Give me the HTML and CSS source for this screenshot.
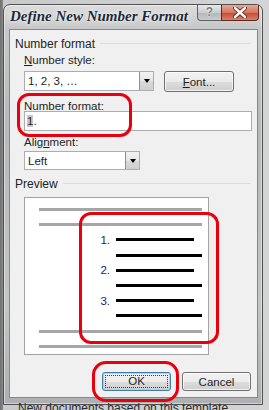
FILE: index.html
```html
<!DOCTYPE html>
<html>
  <head>
    <meta name="viewport" content="width=device-width, initial-scale=1.0">
    <title>Define New Number Format</title>
    <link rel="stylesheet" href="styles.css">
  </head>
  <body>

    <div class="window">

      <div class="titlebar">
        <div class="title">Define New Number Format</div>
        <div class="caption-buttons">
          <div class="caption-help">?</div>
          <div class="caption-close">
            <svg width="14" height="11" viewBox="0 0 14 11">
              <path d="M2 1 L12 10 M12 1 L2 10" stroke="#5a2418" stroke-width="4.2" stroke-linecap="round"/>
              <path d="M2 1 L12 10 M12 1 L2 10" stroke="#ffffff" stroke-width="2.4" stroke-linecap="round"/>
            </svg>
          </div>
        </div>
      </div>

      <div class="client">

        <div class="group-title">
          <span>Number format</span>
          <div class="group-line"></div>
        </div>

        <div class="label label-style"><u>N</u>umber style:</div>
        <div class="row">
          <div class="combo combo-style">
            <span class="combo-text">1, 2, 3, …</span>
            <div class="combo-button"><div class="arrow"></div></div>
          </div>
          <button class="button font-button"><u>F</u>ont...</button>
        </div>

        <div class="label label-format">Number f<u>o</u>rmat:</div>
        <div class="textbox"><span class="selected">1</span>.</div>

        <div class="label label-align">Alig<u>n</u>ment:</div>
        <div class="combo combo-align">
          <span class="combo-text">Left</span>
          <div class="combo-button"><div class="arrow"></div></div>
        </div>

        <div class="group-title group-preview">
          <span>Preview</span>
          <div class="group-line"></div>
        </div>

        <div class="preview">
          <div class="pv-row"><div class="bar bar-gray"></div></div>
          <div class="pv-row"><div class="bar bar-gray"></div></div>
          <div class="pv-row"><span class="num">1.</span><div class="bar bar-short"></div></div>
          <div class="pv-row"><span class="num"></span><div class="bar bar-long"></div></div>
          <div class="pv-row"><span class="num">2.</span><div class="bar bar-short"></div></div>
          <div class="pv-row"><span class="num"></span><div class="bar bar-long"></div></div>
          <div class="pv-row"><span class="num">3.</span><div class="bar bar-short"></div></div>
          <div class="pv-row"><span class="num"></span><div class="bar bar-long"></div></div>
          <div class="pv-row"><div class="bar bar-gray"></div></div>
          <div class="pv-row"><div class="bar bar-gray"></div></div>
        </div>

        <div class="buttons">
          <button class="button default-button"><span class="focus">OK</span></button>
          <button class="button">Cancel</button>
        </div>

      </div>

    </div>

    <div class="behind-text">New documents based on this template</div>

    <!-- red annotation marks drawn over the dialog -->
    <div class="mark mark-format"></div>
    <div class="mark mark-list"></div>
    <div class="mark mark-ok"></div>

  </body>
</html>
```

FILE: styles.css
```css
* {
  font-family: "Liberation Sans", Arial, sans-serif;
  box-sizing: border-box;
}

body {
  margin: 0px;
  padding: 0px;
  width: 269px;
  height: 410px;
  overflow: hidden;
  position: relative;
  background: linear-gradient(to right, #6f6f6f 0px, #8a8a8a 3px, #c9c9c9 3px, #d4d4d4 100%);
}

.window {
  width: 260px;
  height: 401px;
  margin: 4px 6px 0px 3px;
  padding: 0px 4px 6px 5px;
  border: 1px solid #4f5154;
  border-radius: 7px 7px 0px 0px;
  background: linear-gradient(to bottom, #dcdcdc, #c6c7c8 24px, #b7b8ba 120px, #c3c4c5 300px, #aeafb1);
  box-shadow: inset 0px 0px 0px 1px rgba(255, 255, 255, 0.45);
  display: flex;
  flex-direction: column;
}

.titlebar {
  display: flex;
  height: 24px;
  flex-shrink: 0;
}

.title {
  padding-left: 1px;
  padding-top: 3px;
  font-family: "Liberation Serif", serif;
  font-style: italic;
  font-weight: bold;
  font-size: 15px;
  color: #1c2838;
  white-space: nowrap;
  text-shadow: 0px 0px 6px rgba(255, 255, 255, 0.9), 0px 0px 2px rgba(255, 255, 255, 0.9);
}

.caption-buttons {
  display: flex;
  margin-left: auto;
  margin-right: -1px;
  height: 16px;
}

.caption-help {
  width: 24px;
  height: 16px;
  border: 1px solid #5f6062;
  border-right: none;
  border-top: none;
  border-radius: 0px 0px 0px 4px;
  background: linear-gradient(to bottom, #e7e8ea, #c9cbcd 50%, #b3b5b8 51%, #c9cbce);
  color: #7a7c80;
  font-size: 12px;
  font-weight: bold;
  text-align: center;
  line-height: 15px;
  text-shadow: 0px 0px 2px #ffffff, 0px 0px 1px #ffffff;
}

.caption-close {
  width: 38px;
  height: 16px;
  border: 1px solid #5b2a22;
  border-top: none;
  border-radius: 0px 0px 4px 0px;
  background: linear-gradient(to bottom, #e8a995, #d47560 50%, #c44a32 51%, #d8806a);
  display: flex;
  justify-content: center;
  align-items: center;
}

.client {
  height: 369px;
  flex-shrink: 0;
  border: 1px solid #85878a;
  background-color: #f0f0f0;
  padding: 6px 6px 0px 5px;
  display: flex;
  flex-direction: column;
  font-size: 12px;
  color: #1e1e1e;
}

.group-title {
  display: flex;
  align-items: center;
  height: 15px;
  font-size: 12px;
  color: #222222;
}

.group-line {
  flex-grow: 1;
  height: 1px;
  margin-left: 5px;
  background-color: #d5dfe5;
}

.label {
  height: 12px;
  line-height: 12px;
  margin-left: 9px;
  font-size: 11.5px;
}

.label-style {
  margin-top: 3px;
}

.label-format {
  margin-top: 8px;
}

.label-align {
  margin-top: 5px;
}

.row {
  display: flex;
  margin-top: 5px;
  margin-left: 9px;
  height: 21px;
}

.combo {
  display: flex;
  align-items: center;
  height: 20px;
  border: 1px solid #abadb3;
  background-color: #ffffff;
  font-size: 11.5px;
}

.combo-style {
  width: 130px;
}

.combo-align {
  width: 116px;
  height: 19px;
  margin-top: 3px;
  margin-left: 9px;
}

.combo-text {
  flex-grow: 1;
  padding-left: 3px;
}

.combo-button {
  width: 14px;
  height: 100%;
  border-left: 1px solid #8e8f8f;
  background: linear-gradient(to bottom, #f2f2f2, #e6e6e6 50%, #d9d9d9 51%, #d0d0d0);
  display: flex;
  justify-content: center;
  align-items: center;
}

.arrow {
  width: 0px;
  height: 0px;
  border-left: 3.5px solid transparent;
  border-right: 3.5px solid transparent;
  border-top: 4px solid #000000;
}

.button {
  width: 69px;
  height: 19px;
  padding: 0px;
  border: 1px solid #707070;
  border-radius: 3px;
  background: linear-gradient(to bottom, #f2f2f2, #ebebeb 50%, #dddddd 51%, #cfcfcf);
  font-size: 11.5px;
  color: #1e1e1e;
  box-shadow: inset 0px 0px 0px 1px rgba(255, 255, 255, 0.7);
}

.font-button {
  width: 70px;
  height: 21px;
  margin-left: 10px;
}

.textbox {
  width: 228px;
  height: 20px;
  margin-top: -1px;
  margin-left: 9px;
  border: 1px solid #abadb3;
  background-color: #ffffff;
  padding-left: 2px;
  line-height: 18px;
  font-size: 11.5px;
}

.selected {
  background-color: #c8c8c8;
}

.group-preview {
  margin-top: 6px;
}

.preview {
  width: 185px;
  height: 158px;
  margin-top: 6px;
  margin-left: 9px;
  padding: 4px 0px 0px 14px;
  border: 1px solid #a3a3a3;
  background-color: #ffffff;
  display: flex;
  flex-direction: column;
}

.pv-row {
  display: flex;
  align-items: center;
  height: 15.2px;
  flex-shrink: 0;
}

.num {
  width: 71px;
  text-align: right;
  margin-right: 6px;
  font-size: 11.5px;
  color: #21246a;
}

.bar {
  height: 3px;
}

.bar-gray {
  width: 163px;
  background-color: #a6a6a6;
}

.bar-short {
  width: 78px;
  background-color: #000000;
}

.bar-long {
  width: 86px;
  background-color: #000000;
}

.buttons {
  display: flex;
  justify-content: flex-end;
  margin-top: 17px;
  gap: 11px;
}

.default-button {
  border-color: #3c7fb1;
  box-shadow: inset 0px 0px 0px 1px #9fd6f2;
  padding: 2px;
}

.focus {
  display: block;
  height: 100%;
  border: 1px dotted #3a3a3a;
  line-height: 11px;
}

.behind-text {
  padding-left: 18px;
  margin-top: -3px;
  font-size: 12px;
  line-height: 12px;
  color: #2a2a2a;
}

.mark {
  position: absolute;
  border: 3px solid #e8000e;
  border-radius: 12px;
}

.mark-format {
  left: 17px;
  top: 93px;
  width: 115px;
  height: 44px;
}

.mark-list {
  left: 79px;
  top: 212px;
  width: 140px;
  height: 132px;
}

.mark-ok {
  left: 92px;
  top: 361px;
  width: 87px;
  height: 41px;
  border-radius: 14px;
}
```
